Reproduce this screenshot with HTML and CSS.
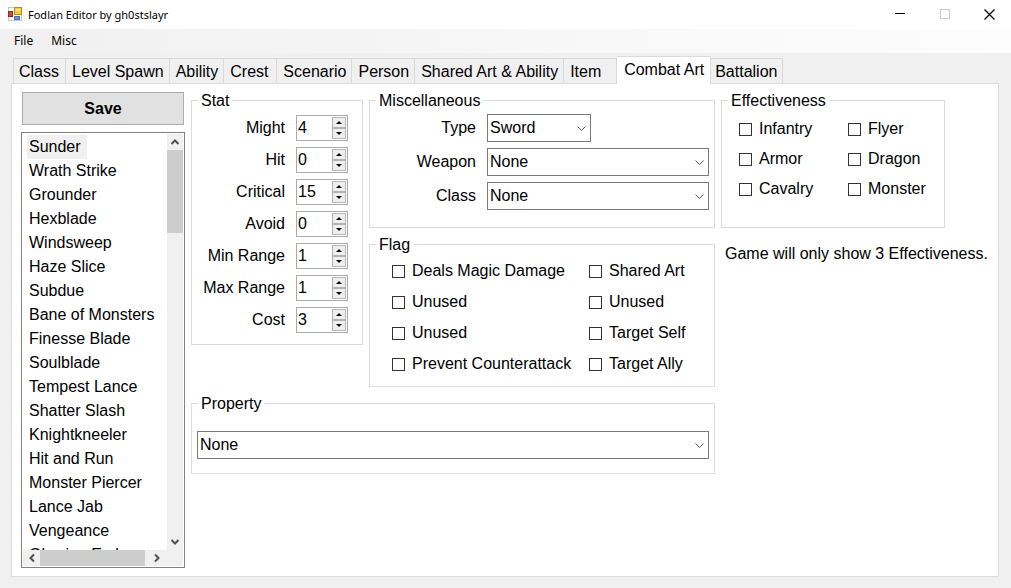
FILE: index.html
```html
<!DOCTYPE html>
<html lang="en">
<head>
    <meta charset="UTF-8">
    <meta name="viewport" content="width=device-width, initial-scale=1.0">
    <title>Fodlan Editor by gh0stslayr</title>
    <link rel="stylesheet" href="styles.css">
</head>
<body>
    <div class="window">
        <!-- Title bar -->
        <header class="titlebar">
            <svg class="app-icon" width="14" height="14" viewBox="0 0 14 14">
                <rect x="0.5" y="0.5" width="13" height="13" fill="#fff" stroke="#c3c6cc"/>
                <rect x="6.5" y="0.5" width="7" height="7" fill="#f5cb45" stroke="#b98a1c"/>
                <rect x="8" y="2" width="4" height="2" fill="#fbe489"/>
                <rect x="0.5" y="4.5" width="4" height="5" fill="#c9513f" stroke="#8c2a20"/>
                <rect x="6.5" y="9.5" width="5" height="3" fill="#6a97dc" stroke="#4a73b8"/>
            </svg>
            <span class="caption">Fodlan Editor by gh0stslayr</span>
            <div class="window-buttons">
                <button type="button" aria-label="Minimize">
                    <svg width="11" height="11" viewBox="0 0 11 11"><path d="M0 4.5H10" stroke="#000"/></svg>
                </button>
                <button type="button" aria-label="Maximize" disabled>
                    <svg width="11" height="11" viewBox="0 0 11 11"><rect x="0.5" y="0.5" width="9" height="9" fill="none" stroke="#ccc"/></svg>
                </button>
                <button type="button" aria-label="Close">
                    <svg width="11" height="11" viewBox="0 0 11 11"><path d="M0.5 0.5L10.5 10.5M10.5 0.5L0.5 10.5" stroke="#000" stroke-width="1.2"/></svg>
                </button>
            </div>
        </header>

        <nav class="menubar">
            <button type="button">File</button>
            <button type="button">Misc</button>
        </nav>

        <!-- Tabs -->
        <div class="tabs" role="tablist">
            <button type="button" role="tab" class="tab">Class</button>
            <button type="button" role="tab" class="tab">Level Spawn</button>
            <button type="button" role="tab" class="tab">Ability</button>
            <button type="button" role="tab" class="tab">Crest</button>
            <button type="button" role="tab" class="tab">Scenario</button>
            <button type="button" role="tab" class="tab">Person</button>
            <button type="button" role="tab" class="tab">Shared Art &amp; Ability</button>
            <button type="button" role="tab" class="tab">Item</button>
            <button type="button" role="tab" class="tab active" aria-selected="true">Combat Art</button>
            <button type="button" role="tab" class="tab">Battalion</button>
        </div>

        <main class="panel">
            <!-- Combat art list -->
            <section class="sidebar">
                <button type="button" class="save">Save</button>
                <div class="listbox">
                    <select class="arts" size="18" aria-label="Combat arts">
                        <option selected>Sunder</option>
                        <option>Wrath Strike</option>
                        <option>Grounder</option>
                        <option>Hexblade</option>
                        <option>Windsweep</option>
                        <option>Haze Slice</option>
                        <option>Subdue</option>
                        <option>Bane of Monsters</option>
                        <option>Finesse Blade</option>
                        <option>Soulblade</option>
                        <option>Tempest Lance</option>
                        <option>Shatter Slash</option>
                        <option>Knightkneeler</option>
                        <option>Hit and Run</option>
                        <option>Monster Piercer</option>
                        <option>Lance Jab</option>
                        <option>Vengeance</option>
                        <option>Glowing Ember</option>
                    </select>
                    <div class="scroll vertical">
                        <svg width="16" height="16" viewBox="0 0 16 16"><path d="M4.5 10L8 6.5L11.5 10"/></svg>
                        <div class="thumb"></div>
                        <svg width="16" height="16" viewBox="0 0 16 16"><path d="M4.5 6L8 9.5L11.5 6"/></svg>
                    </div>
                    <div class="scroll horizontal">
                        <svg width="16" height="16" viewBox="0 0 16 16"><path d="M10 4.5L6.5 8L10 11.5"/></svg>
                        <div class="thumb"></div>
                        <svg width="16" height="16" viewBox="0 0 16 16"><path d="M6 4.5L9.5 8L6 11.5"/></svg>
                    </div>
                </div>
            </section>

            <fieldset class="stat">
                <legend>Stat</legend>
                <div class="fields">
                    <label for="might">Might</label>
                    <div class="spinner">
                        <input id="might" type="text" inputmode="numeric" value="4">
                        <div class="steps"><button type="button" class="up" aria-label="Increase might"></button><button type="button" class="down" aria-label="Decrease might"></button></div>
                    </div>
                    <label for="hit">Hit</label>
                    <div class="spinner">
                        <input id="hit" type="text" inputmode="numeric" value="0">
                        <div class="steps"><button type="button" class="up" aria-label="Increase hit"></button><button type="button" class="down" aria-label="Decrease hit"></button></div>
                    </div>
                    <label for="critical">Critical</label>
                    <div class="spinner">
                        <input id="critical" type="text" inputmode="numeric" value="15">
                        <div class="steps"><button type="button" class="up" aria-label="Increase critical"></button><button type="button" class="down" aria-label="Decrease critical"></button></div>
                    </div>
                    <label for="avoid">Avoid</label>
                    <div class="spinner">
                        <input id="avoid" type="text" inputmode="numeric" value="0">
                        <div class="steps"><button type="button" class="up" aria-label="Increase avoid"></button><button type="button" class="down" aria-label="Decrease avoid"></button></div>
                    </div>
                    <label for="min-range">Min Range</label>
                    <div class="spinner">
                        <input id="min-range" type="text" inputmode="numeric" value="1">
                        <div class="steps"><button type="button" class="up" aria-label="Increase min range"></button><button type="button" class="down" aria-label="Decrease min range"></button></div>
                    </div>
                    <label for="max-range">Max Range</label>
                    <div class="spinner">
                        <input id="max-range" type="text" inputmode="numeric" value="1">
                        <div class="steps"><button type="button" class="up" aria-label="Increase max range"></button><button type="button" class="down" aria-label="Decrease max range"></button></div>
                    </div>
                    <label for="cost">Cost</label>
                    <div class="spinner">
                        <input id="cost" type="text" inputmode="numeric" value="3">
                        <div class="steps"><button type="button" class="up" aria-label="Increase cost"></button><button type="button" class="down" aria-label="Decrease cost"></button></div>
                    </div>
                </div>
            </fieldset>

            <div class="middle">
                <fieldset class="misc">
                    <legend>Miscellaneous</legend>
                    <div class="fields">
                        <label for="type">Type</label>
                        <div class="combo short">
                            <select id="type"><option>Sword</option></select>
                            <svg width="9" height="6" viewBox="0 0 9 6"><path d="M0.5 0.5L4.5 4.5L8.5 0.5"/></svg>
                        </div>
                        <label for="weapon">Weapon</label>
                        <div class="combo">
                            <select id="weapon"><option>None</option></select>
                            <svg width="9" height="6" viewBox="0 0 9 6"><path d="M0.5 0.5L4.5 4.5L8.5 0.5"/></svg>
                        </div>
                        <label for="class">Class</label>
                        <div class="combo">
                            <select id="class"><option>None</option></select>
                            <svg width="9" height="6" viewBox="0 0 9 6"><path d="M0.5 0.5L4.5 4.5L8.5 0.5"/></svg>
                        </div>
                    </div>
                </fieldset>

                <fieldset class="flag">
                    <legend>Flag</legend>
                    <div class="checks">
                        <label><input type="checkbox">Deals Magic Damage</label>
                        <label><input type="checkbox">Shared Art</label>
                        <label><input type="checkbox">Unused</label>
                        <label><input type="checkbox">Unused</label>
                        <label><input type="checkbox">Unused</label>
                        <label><input type="checkbox">Target Self</label>
                        <label><input type="checkbox">Prevent Counterattack</label>
                        <label><input type="checkbox">Target Ally</label>
                    </div>
                </fieldset>
            </div>

            <div class="right">
                <fieldset class="effectiveness">
                    <legend>Effectiveness</legend>
                    <div class="checks">
                        <label><input type="checkbox">Infantry</label>
                        <label><input type="checkbox">Flyer</label>
                        <label><input type="checkbox">Armor</label>
                        <label><input type="checkbox">Dragon</label>
                        <label><input type="checkbox">Cavalry</label>
                        <label><input type="checkbox">Monster</label>
                    </div>
                </fieldset>
                <p class="note">Game will only show 3 Effectiveness.</p>
            </div>

            <fieldset class="property">
                <legend>Property</legend>
                <div class="combo">
                    <select aria-label="Property"><option>None</option></select>
                    <svg width="9" height="6" viewBox="0 0 9 6"><path d="M0.5 0.5L4.5 4.5L8.5 0.5"/></svg>
                </div>
            </fieldset>
        </main>
    </div>
</body>
</html>
```
FILE: styles.css
```css
* {
    box-sizing: border-box;
}

body {
    margin: 0;
    background: #f0f0f0;
    color: #000;
    font-family: "Liberation Sans", Arial, sans-serif;
    font-size: 16px;
    line-height: 18px;
}

button, input, select {
    margin: 0;
    padding: 0;
    font: inherit;
    color: inherit;
}

.window {
    display: flex;
    flex-direction: column;
    height: 100vh;
}

/* Title bar and menu */
.titlebar {
    display: flex;
    flex: none;
    align-items: center;
    height: 29px;
    padding-left: 8px;
    background: #fff;
    font-family: "Noto Sans", "Open Sans", sans-serif;
    font-size: 11px;
}

.app-icon {
    margin-bottom: 2px;
}

.caption {
    margin-left: 6px;
}

.window-buttons {
    display: flex;
    margin-left: auto;
}

.window-buttons button {
    display: flex;
    align-items: center;
    justify-content: center;
    width: 45px;
    height: 26px;
    border: 0;
    background: none;
}

.window-buttons button:last-child {
    width: 43px;
}

.menubar {
    display: flex;
    flex: none;
    gap: 2px;
    height: 24px;
    padding-left: 6px;
    background: linear-gradient(90deg, #f0f0f0, #fdfdfd);
}

.menubar button {
    padding: 0 8px;
    border: 0;
    background: none;
    font-family: "Noto Sans", "Open Sans", sans-serif;
    font-size: 12px;
}

/* Tabs */
.tabs {
    display: flex;
    flex: none;
    align-items: flex-end;
    height: 30px;
    padding-left: 13px;
}

.tab {
    min-width: 53px;
    height: 25px;
    padding: 1px 5px 0 6px;
    border: 1px solid #d9d9d9;
    border-width: 1px 1px 0 0;
    background: #f0f0f0;
    text-align: left;
    white-space: nowrap;
}

.tab:first-child {
    padding-left: 5px;
    border-left-width: 1px;
}

.tab.active {
    position: relative;
    height: 28px;
    margin-bottom: -1px;
    padding: 0 6px 2px 7px;
    border-color: #dcdcdc;
    background: #fff;
}

.tab.active + .tab {
    padding-left: 4px;
}

.panel {
    display: grid;
    grid-template-columns: 164px 172px 346px 1fr;
    grid-template-rows: auto 1fr;
    gap: 8px 6px;
    flex: 1;
    min-height: 0;
    margin: 0 12px 11px 11px;
    padding: 8px 9px;
    border: 1px solid #dcdcdc;
    background: #fff;
}

/* Combat art list */
.sidebar {
    display: flex;
    flex-direction: column;
    grid-row: 1 / 3;
    gap: 7px;
    min-height: 0;
}

.save {
    height: 33px;
    margin: 0 1px;
    border: 1px solid #adadad;
    background: #e1e1e1;
    font-weight: bold;
}

.listbox {
    display: grid;
    grid-template-columns: 1fr 16px;
    grid-template-rows: 1fr 16px;
    flex: 1;
    min-height: 0;
    padding: 1px;
    border: 1px solid #828282;
}

.arts {
    min-width: 0;
    height: 100%;
    min-height: 0;
    padding: 1px 0 0 4px;
    border: 0;
    outline: 0;
    background: #fff;
    overflow: hidden;
}

.arts option {
    width: fit-content;
    height: 24px;
    padding: 3px 6px 3px 2px;
    color: #000;
}

.arts option:checked {
    background: #f0f0f0 linear-gradient(#f0f0f0, #f0f0f0);
}

.scroll {
    display: flex;
    background: #f0f0f0;
}

.scroll path {
    fill: none;
    stroke: #505050;
    stroke-width: 2;
}

.scroll svg {
    flex: none;
}

.scroll .thumb {
    background: #cdcdcd;
}

.scroll.vertical {
    flex-direction: column;
    justify-content: space-between;
}

.scroll.vertical .thumb {
    height: 20%;
    margin-bottom: auto;
}

.scroll.horizontal {
    grid-column: 1 / 3;
    padding: 0 18px 0 1px;
}

.scroll.horizontal .thumb {
    flex: 1;
    margin-right: 4px;
}

/* Group boxes */
fieldset {
    min-width: 0;
    margin: 0;
    padding: 0 5px;
    border: 1px solid #dcdcdc;
}

legend {
    margin-left: 1px;
    padding: 1px 3px 0;
    line-height: 16px;
}

.fields {
    display: grid;
    grid-template-columns: 1fr auto;
    align-items: center;
    gap: 6px 11px;
    text-align: right;
}

.stat {
    align-self: start;
    padding: 6px 14px 11px 5px;
}

.spinner {
    display: flex;
    width: 52px;
    height: 26px;
    padding: 1px;
    border: 1px solid #ababab;
    background: #fff;
}

.spinner input {
    flex: 1;
    min-width: 0;
    border: 0;
    outline: 0;
    background: none;
}

.steps {
    display: flex;
    flex-direction: column;
    width: 14px;
}

.steps button {
    display: flex;
    flex: 1;
    align-items: center;
    justify-content: center;
    border: 1px solid #b4b4b4;
    background: #efefef;
}

.steps button::before {
    content: '';
    border: 3px solid transparent;
}

.steps .up::before {
    border-top: 0;
    border-bottom-color: #000;
}

.steps .down::before {
    border-bottom: 0;
    border-top-color: #000;
}

.middle {
    display: flex;
    flex-direction: column;
    gap: 8px;
}

.misc {
    padding: 5px 5px 17px;
}

.misc .fields {
    grid-template-columns: 1fr 222px;
}

.combo {
    position: relative;
    height: 28px;
}

.combo.short {
    width: 104px;
}

.combo select {
    width: 100%;
    height: 100%;
    padding: 0 20px 0 2px;
    border: 1px solid #7a7a7a;
    border-radius: 0;
    background: #fff;
    appearance: none;
}

.combo svg {
    position: absolute;
    top: 12px;
    right: 5px;
    pointer-events: none;
}

.combo path {
    fill: none;
    stroke: #555;
}

.checks {
    display: grid;
    gap: 13px 0;
}

.checks label {
    display: flex;
    align-items: center;
    gap: 7px;
    white-space: nowrap;
}

.checks input {
    width: 13px;
    height: 13px;
    border: 1px solid #333;
    background: #fff;
    appearance: none;
}

.checks input:checked {
    background: #333;
    box-shadow: inset 0 0 0 2px #fff;
}

.flag {
    padding: 9px 5px 13px 22px;
}

.flag .checks {
    grid-template-columns: 197px 1fr;
}

.effectiveness {
    width: 224px;
    padding: 11px 5px 29px 17px;
}

.effectiveness .checks {
    grid-template-columns: 109px 1fr;
    row-gap: 12px;
}

.flag legend {
    margin-left: -16px;
}

.effectiveness legend {
    margin-left: -11px;
}

.note {
    margin: 17px 0 0 4px;
    white-space: nowrap;
}

.property {
    grid-column: 2 / 4;
    align-self: start;
    padding: 19px 5px 14px;
}
```
